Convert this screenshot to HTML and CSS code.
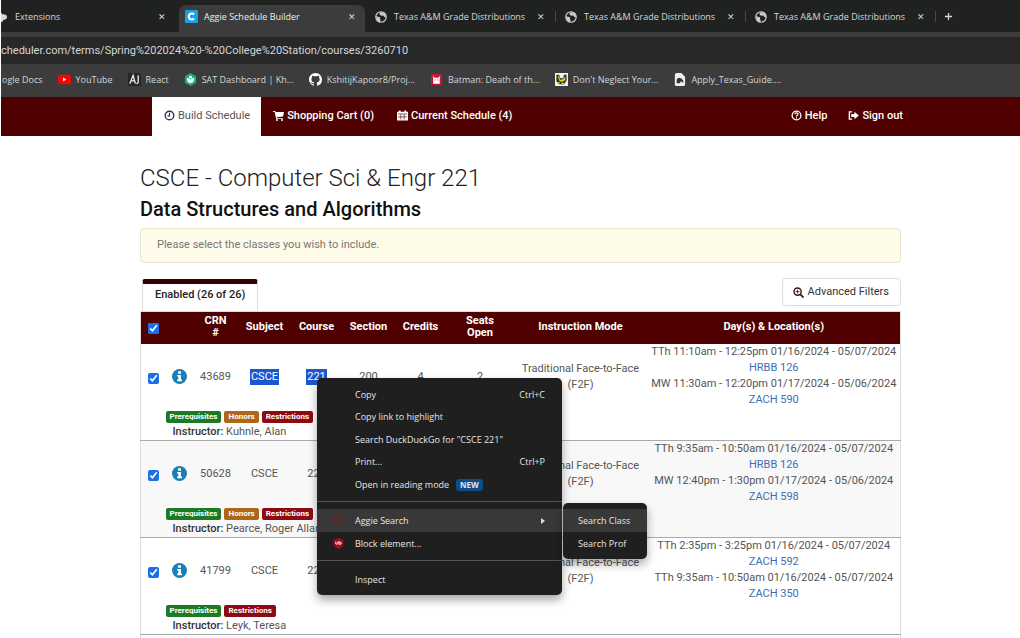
FILE: index.html
```html
<!DOCTYPE html>
<html lang="en">
<head>
  <meta charset="utf-8">
  <title>Aggie Schedule Builder</title>
  <link rel="stylesheet" href="styles.css">
</head>
<body>
  <svg class="sprite" aria-hidden="true">
    <symbol id="globe" viewBox="0 0 16 16">
      <circle cx="8" cy="8" r="7" fill="#202221" stroke="#c8cacc" stroke-width="1.6"/>
      <path d="M1.5 6.5 4 7.5l3 .8-.5 2.2 1 1.5-.5 3C3.5 14.5 1.2 11.500 1.5 6.500zM6 1.500l5 0 3 2.500 1 4.500-2.500-.5-1.500-2-3 .2-1.800-1.700z" fill="#c8cacc"/>
    </symbol>
    <symbol id="info" viewBox="0 0 16 16">
      <circle cx="8" cy="8" r="8" fill="#1a7fb5"/>
      <path d="M6.500 2.500h3v2.500h-3zM5.500 6.300h4v5h1.200V13H5.500v-1.700h1.200V8H5.500z" fill="#fff"/>
    </symbol>
  </svg>

  <div class="browser">
    <div class="tabs">
      <div class="tab tab-first">
        <svg class="puzzle" viewBox="0 0 6 12"><path d="M0 2h1v1.500c3-.5 5 .5 5 2.500s-2 3-3 2.500L1 11H0z" fill="#d5d7d8"/></svg>
        <span class="tab-title">Extensions</span>
        <button class="close" aria-label="Close tab">✕</button>
      </div>
      <div class="tab active">
        <svg class="fav" viewBox="0 0 14 14"><rect width="14" height="14" rx="1" fill="#1ba0e8"/><path d="M9.800 4.800A3.300 3.300 0 1 0 9.800 9.200" fill="none" stroke="#fff" stroke-width="2.200"/></svg>
        <span class="tab-title">Aggie Schedule Builder</span>
        <button class="close" aria-label="Close tab">✕</button>
      </div>
      <div class="tab">
        <svg class="fav globe"><use href="#globe"/></svg>
        <span class="tab-title">Texas A&amp;M Grade Distributions</span>
        <button class="close" aria-label="Close tab">✕</button>
      </div>
      <div class="tab divided">
        <svg class="fav globe"><use href="#globe"/></svg>
        <span class="tab-title">Texas A&amp;M Grade Distributions</span>
        <button class="close" aria-label="Close tab">✕</button>
      </div>
      <div class="tab divided">
        <svg class="fav globe"><use href="#globe"/></svg>
        <span class="tab-title">Texas A&amp;M Grade Distributions</span>
        <button class="close" aria-label="Close tab">✕</button>
      </div>
      <button class="new-tab divided" aria-label="New tab"><svg viewBox="0 0 10 10"><path d="M5 1v8M1 5h8" stroke="#d5d7d8" stroke-width="1.400"/></svg></button>
    </div>

    <div class="address">
      <input class="url" type="text" aria-label="Address" value="cheduler.com/terms/Spring%202024%20-%20College%20Station/courses/3260710">
    </div>

    <div class="bookmarks">
      <a class="bm" href="#">ogle Docs</a>
      <a class="bm" href="#"><svg viewBox="0 0 14 14"><rect x="0" y="2" width="14" height="10" rx="2" fill="#f00"/><path d="M5.500 4.800v4.400L9 7z" fill="#fff"/></svg>YouTube</a>
      <a class="bm" href="#"><svg viewBox="0 0 14 14"><rect width="14" height="14" rx="2" fill="#262626"/><path d="M2 11.500 5.500 2.500 8 11.500M3 8.500h4M11 2.500v7q0 2-2 2" fill="none" stroke="#eee" stroke-width="1.400"/></svg>React</a>
      <a class="bm" href="#"><svg viewBox="0 0 14 14"><path d="M7 0l6 3.500v7L7 14l-6-3.500v-7z" fill="#14b083"/><circle cx="7" cy="4.500" r="1.500" fill="#fff"/><path d="M3 5.500c3 0 4 1.500 4 2.500 0-1 1-2.500 4-2.500 0 4-2 5.500-4 5.500S3 9.500 3 5.500z" fill="#fff"/></svg>SAT Dashboard | Kh...</a>
      <a class="bm" href="#"><svg viewBox="0 0 16 16"><path fill="#fff" d="M8 0C3.580 0 0 3.580 0 8c0 3.540 2.290 6.530 5.470 7.590.4.070.55-.17.55-.38 0-.19-.01-.82-.01-1.490-2.010.37-2.530-.49-2.690-.94-.09-.23-.48-.94-.82-1.130-.28-.15-.68-.52-.01-.53.63-.01 1.080.58 1.230.82.72 1.210 1.870.87 2.330.66.07-.52.28-.87.51-1.070-1.780-.2-3.640-.89-3.640-3.950 0-.87.31-1.590.82-2.150-.08-.2-.36-1.020.08-2.120 0 0 .67-.21 2.200.82.640-.18 1.320-.27 2-.27s1.360.09 2 .27c1.530-1.040 2.200-.82 2.200-.82.440 1.100.160 1.920.080 2.120.510.560.820 1.270.820 2.150 0 3.070-1.870 3.750-3.650 3.950.290.250.540.730.540 1.480 0 1.070-.01 1.930-.01 2.200 0 .210.150.460.550.380A8.010 8.010 0 0 0 16 8c0-4.420-3.580-8-8-8z"/></svg>KshitijKapoor8/Proj...</a>
      <a class="bm" href="#"><svg viewBox="0 0 14 14"><rect x="1" y="1" width="12" height="12" fill="#c2183a"/><path d="M3.500 3 5 5h4l1.500-2v8.500h-7z" fill="#fff"/><path d="M5 7.500h1M8 7.500h1" stroke="#c2183a"/></svg>Batman: Death of th...</a>
      <a class="bm" href="#"><svg viewBox="0 0 14 14"><rect width="14" height="14" fill="#f4f4ee"/><path d="M1.500 2h3l1.500 4 3-.5L9.500 2h3v6l-3 4.500-5-.5-3-3z" fill="#333"/><path d="M3 3.500l1.500 0 1 4 3.500-1 2-3v4l-3 2-3-.5zM3 10a1.300 1.300 0 1 0 2.600 0zM7 10.500h2.500v1.500H7z" fill="#e8dc1c"/></svg>Don't Neglect Your...</a>
      <a class="bm" href="#"><svg viewBox="0 0 14 14"><path d="M2 2a2 2 0 0 1 2-2h5l4 4v8a2 2 0 0 1-2 2H4a2 2 0 0 1-2-2z" fill="#eee"/><path d="M4 11V7l2-2 3 1 2 2v3l-2-2-2 2z" fill="#333"/></svg>Apply_Texas_Guide....</a>
    </div>
  </div>

  <nav class="navbar">
    <a class="nav-link nav-current" href="#"><svg viewBox="0 0 12 12"><circle cx="6" cy="6" r="4.700" fill="none" stroke="#2c3350" stroke-width="1.500"/><path d="M6 3v3.400H3.800" fill="none" stroke="#2c3350" stroke-width="1.200"/></svg>Build Schedule</a>
    <a class="nav-link" href="#"><svg viewBox="0 0 12 12"><path d="M0 1h2.500l.4 1.200H12L11 7 4.200 7.800l.2.800h6.200v1H3.400L1.800 2.200H0z" fill="#fff"/><circle cx="4.300" cy="10.800" r="1.100" fill="#fff"/><circle cx="9.800" cy="10.800" r="1.100" fill="#fff"/></svg>Shopping Cart (0)</a>
    <a class="nav-link" href="#"><svg viewBox="0 0 12 12"><path d="M0 2h2V.5h2V2h4V.5h2V2h2v9.500H0z" fill="#fff"/><path d="M1 4.300h10M1 7.500h10M4.200 4.500v6M7.800 4.500v6" stroke="#500000" stroke-width=".7"/></svg>Current Schedule (4)</a>
    <a class="nav-link nav-help" href="#"><svg viewBox="0 0 12 12"><circle cx="6" cy="6" r="4.800" fill="none" stroke="#fff" stroke-width="1.400"/><path d="M4.200 4.600Q4.500 3.200 6 3.200t1.800 1.400Q7.800 5.500 6 6.200v.8M6 8v1.300" fill="none" stroke="#fff" stroke-width="1.300"/></svg>Help</a>
    <a class="nav-link nav-out" href="#"><svg viewBox="0 0 12 12"><path d="M4.500 2H1.500v8h3" fill="none" stroke="#fff" stroke-width="1.500"/><path d="M3.500 4.300H7V1.800L11.800 6 7 10.200V7.700H3.500z" fill="#fff"/></svg>Sign out</a>
  </nav>

  <main class="page">
    <h1>CSCE - Computer Sci &amp; Engr 221</h1>
    <h2>Data Structures and Algorithms</h2>
    <div class="notice">Please select the classes you wish to include.</div>

    <div class="toolbar">
      <button class="enabled-tab">Enabled (26 of 26)</button>
      <button class="filters"><svg viewBox="0 0 12 12"><circle cx="5" cy="5" r="3.900" fill="none" stroke="#3a1a1a" stroke-width="1.600"/><path d="M8 8l3.500 3.500" stroke="#3a1a1a" stroke-width="2"/><path d="M5 3v4M3 5h4" stroke="#3a1a1a"/></svg>Advanced Filters</button>
    </div>

    <table class="sections">
      <colgroup>
        <col class="c-check"><col class="c-info"><col class="c-crn"><col class="c-num"><col class="c-num"><col class="c-num"><col class="c-num"><col class="c-seats"><col class="c-mode"><col>
      </colgroup>
      <thead>
        <tr>
          <th><input type="checkbox" aria-label="Select all sections" checked></th>
          <th></th>
          <th>CRN<br>#</th>
          <th>Subject</th>
          <th>Course</th>
          <th>Section</th>
          <th>Credits</th>
          <th>Seats<br>Open</th>
          <th>Instruction Mode</th>
          <th>Day(s) &amp; Location(s)</th>
        </tr>
      </thead>
      <tbody>
        <tr class="main">
          <td><input type="checkbox" aria-label="Section 43689" checked></td>
          <td><svg class="info"><use href="#info"/></svg></td>
          <td>43689</td>
          <td><span class="selected">CSCE</span></td>
          <td><span class="selected">221</span></td>
          <td>200</td>
          <td>4</td>
          <td>2</td>
          <td>Traditional Face-to-Face (F2F)</td>
          <td class="days">TTh 11:10am - 12:25pm 01/16/2024 - 05/07/2024<br><a href="#">HRBB 126</a><br>MW 11:30am - 12:20pm 01/17/2024 - 05/06/2024<br><a href="#">ZACH 590</a></td>
        </tr>
        <tr class="extra">
          <td></td>
          <td colspan="9">
            <div class="badges"><span class="badge green">Prerequisites</span><span class="badge orange">Honors</span><span class="badge red">Restrictions</span></div>
            <div class="instructor"><b>Instructor:</b> Kuhnle, Alan</div>
          </td>
        </tr>
      </tbody>
      <tbody>
        <tr class="main">
          <td><input type="checkbox" aria-label="Section 50628" checked></td>
          <td><svg class="info"><use href="#info"/></svg></td>
          <td>50628</td>
          <td>CSCE</td>
          <td>221</td>
          <td></td>
          <td></td>
          <td></td>
          <td>Traditional Face-to-Face (F2F)</td>
          <td class="days">TTh 9:35am - 10:50am 01/16/2024 - 05/07/2024<br><a href="#">HRBB 126</a><br>MW 12:40pm - 1:30pm 01/17/2024 - 05/06/2024<br><a href="#">ZACH 598</a></td>
        </tr>
        <tr class="extra">
          <td></td>
          <td colspan="9">
            <div class="badges"><span class="badge green">Prerequisites</span><span class="badge orange">Honors</span><span class="badge red">Restrictions</span></div>
            <div class="instructor"><b>Instructor:</b> Pearce, Roger Allan</div>
          </td>
        </tr>
      </tbody>
      <tbody>
        <tr class="main">
          <td><input type="checkbox" aria-label="Section 41799" checked></td>
          <td><svg class="info"><use href="#info"/></svg></td>
          <td>41799</td>
          <td>CSCE</td>
          <td>221</td>
          <td></td>
          <td></td>
          <td></td>
          <td>Traditional Face-to-Face (F2F)</td>
          <td class="days">TTh 2:35pm - 3:25pm 01/16/2024 - 05/07/2024<br><a href="#">ZACH 592</a><br>TTh 9:35am - 10:50am 01/16/2024 - 05/07/2024<br><a href="#">ZACH 350</a></td>
        </tr>
        <tr class="extra">
          <td></td>
          <td colspan="9">
            <div class="badges"><span class="badge green">Prerequisites</span><span class="badge red">Restrictions</span></div>
            <div class="instructor"><b>Instructor:</b> Leyk, Teresa</div>
          </td>
        </tr>
      </tbody>
      <tbody>
        <tr class="main">
          <td colspan="9"></td>
          <td class="days">TTh 3:55pm - 4:45pm 01/16/2024 - 05/07/2024</td>
        </tr>
      </tbody>
    </table>
  </main>

  <div class="menu context-menu">
    <div class="menu-group">
      <button class="item">Copy<span class="key">Ctrl+C</span></button>
      <button class="item">Copy link to highlight</button>
      <button class="item">Search DuckDuckGo for "CSCE 221"</button>
      <button class="item">Print...<span class="key">Ctrl+P</span></button>
      <button class="item">Open in reading mode<span class="new">NEW</span></button>
    </div>
    <hr>
    <button class="item hovered"><svg class="item-icon" viewBox="0 0 12 12"><path d="M3 10.500A5 5 0 1 1 9 10.500M2 10.500h2.500M7.500 10.500H10" fill="none" stroke="#7a1c1c" stroke-width="1.300"/></svg>Aggie Search<span class="arrow"></span></button>
    <button class="item"><svg class="item-icon" viewBox="0 0 12 12"><path d="M6 0l5.500 1.500v5Q11 10 6 12 1 10 .5 6.500v-5z" fill="#a00d16"/><path d="M3 4v2.200q1.300 1.300 2.200 0V4M6.500 3.800v3.200M6.500 4.300q2.700 0 2.700 1.300T6.500 6.900" fill="none" stroke="#fff" stroke-width="1"/></svg>Block element...</button>
    <hr>
    <button class="item">Inspect</button>
  </div>

  <div class="menu submenu">
    <button class="item hovered">Search Class</button>
    <button class="item">Search Prof</button>
  </div>
</body>
</html>
```
FILE: styles.css
```css
* { box-sizing: border-box; }
body {
  margin: 0;
  height: 100vh;
  overflow: hidden;
  background: #fff;
  color: #555;
  font: 11px/16px Roboto, "Liberation Sans", sans-serif;
}
a { text-decoration: none; }
button { border: none; background: none; padding: 0; font: inherit; }
.sprite { position: absolute; width: 0; height: 0; }

/* browser chrome */
.browser {
  margin-left: 1px;
  background: #3c3c3c;
  color: #d5d7d8;
  font: 9px/16px "Open Sans", "Noto Sans", sans-serif;
}
.tabs {
  display: flex;
  height: 32px;
  padding-top: 5px;
  background: #202221;
}
.tab {
  display: flex;
  align-items: center;
  width: 190px;
  padding: 0 9px 4px 10px;
}
.tab-first { width: 178px; padding: 0 12px 4px 0; }
.tab-first .tab-title { margin-left: 8px; }
.active {
  width: 186px;
  padding: 0 8px 4px 6px;
  background: #3c3c3c;
  border-radius: 7px 7px 0 0;
  color: #eee;
}
.tab-title { flex: 1; white-space: nowrap; }
.fav { width: 13px; height: 13px; margin-right: 6px; }
.globe { width: 12px; height: 12px; margin-right: 7px; }
.puzzle { width: 6px; height: 12px; }
.close { width: 10px; color: #d5d7d8; font-size: 9px; line-height: 16px; }
.divided {
  background: linear-gradient(#484a49, #484a49) 0 6px / 1px 11px no-repeat;
}
.new-tab { width: 26px; height: 23px; }
.new-tab svg { display: block; width: 9px; height: 9px; margin: auto; }
.address { padding: 5px 0 0; }
.url {
  display: block;
  width: 100%;
  height: 27px;
  padding: 0;
  border: none;
  background: #282828;
  color: #d5d7d8;
  font: 11px/16px Roboto, "Liberation Sans", sans-serif;
}
.bookmarks {
  display: flex;
  align-items: center;
  height: 33px;
  padding: 0 0 2px 1px;
}
.bm {
  display: flex;
  align-items: center;
  gap: 5px;
  margin-right: 15px;
  color: #d5d7d8;
  white-space: nowrap;
}
.bm svg { width: 13px; height: 13px; }

/* site navigation */
.navbar {
  display: flex;
  height: 39px;
  margin-left: 1px;
  padding: 0 117px 0 151px;
  background: #500000;
}
.nav-link {
  display: flex;
  align-items: center;
  gap: 3px;
  padding: 0 11px 2px 12px;
  color: #fff;
  font-weight: 500;
}
.nav-link svg { width: 11px; height: 11px; }
.nav-current { background: #fff; color: #555; font-weight: 400; }
.nav-help { margin-left: auto; }
.nav-out { padding: 0 0 2px 10px; }

/* course page */
.page { padding: 28px 119px 0 140px; }
h1 { margin: 0; color: #222; font-size: 24px; font-weight: 300; line-height: 28px; }
h2 { margin: 4px 0 6px; color: #111; font-size: 20px; font-weight: 500; line-height: 26px; }
.notice {
  height: 35px;
  padding: 8px 16px;
  border: 1px solid #e9e5d0;
  border-radius: 4px;
  background: #fffbe9;
  color: #777;
}
.toolbar {
  display: flex;
  justify-content: space-between;
  align-items: flex-start;
  height: 48px;
  padding: 15px 0 0 2px;
}
.enabled-tab {
  height: 33px;
  margin-top: 1px;
  padding: 0 12px 6px;
  border: 1px solid #ddd;
  border-top: 5px solid #3a0003;
  border-bottom: none;
  border-radius: 3px 3px 0 0;
  color: #222;
  font-weight: 500;
}
.filters {
  display: flex;
  align-items: center;
  gap: 4px;
  height: 28px;
  padding: 0 11px 0 10px;
  border: 1px solid #ddd;
  border-radius: 4px;
  color: #333;
}
.filters svg { width: 11px; height: 11px; }

.sections {
  width: 100%;
  table-layout: fixed;
  border-collapse: collapse;
  border: 1px solid #ddd;
  text-align: center;
}
.c-check { width: 25px; }
.c-info { width: 27px; }
.c-crn { width: 46px; }
.c-num { width: 52px; }
.c-seats { width: 67px; }
.c-mode { width: 134px; }
th {
  height: 32px;
  padding: 0 0 2px;
  background: #500000;
  color: #fff;
  font-weight: 700;
  line-height: 12px;
}
td { padding: 0; }
.main { height: 66px; }
.main .days { vertical-align: top; }
.extra { height: 31px; text-align: left; vertical-align: top; }
tbody { border-bottom: 1px solid #aaa; }
tbody:nth-of-type(even) { background: #f8f8f8; }
input[type="checkbox"] {
  display: block;
  width: 11px;
  height: 11px;
  margin: 4px auto 0;
  accent-color: #1a6fe8;
}
.info { display: block; width: 15px; height: 15px; margin: auto; }
.days a { color: #3f6db5; }
.selected { display: inline-block; padding: 0 1px; background: #1c57cf; color: #fff; }
.badges { display: flex; gap: 3px; padding-top: 1px; }
.badge {
  height: 12px;
  padding: 0 4px;
  border-radius: 2px;
  color: #fff;
  font-size: 8px;
  font-weight: 700;
  line-height: 12px;
}
.green { background: #1d7a24; }
.orange { background: #b0661a; }
.red { background: #8d0a12; }
.instructor { padding: 1px 0 0 7px; }
.instructor b { color: #333; font-weight: 500; }

/* context menu */
.menu {
  position: absolute;
  padding: 6px 0 4px;
  border-radius: 5px;
  background: #1f1f1f;
  box-shadow: 0 5px 10px rgba(0, 0, 0, 0.35);
  font: 9px/22px "Open Sans", "Noto Sans", sans-serif;
}
.context-menu { left: 317px; top: 378px; width: 245px; }
.submenu { left: 563px; top: 503px; width: 84px; }
.menu-group { display: grid; grid-template-rows: repeat(5, 1fr); height: 112px; }
.item {
  display: flex;
  align-items: center;
  width: 100%;
  height: 23px;
  padding: 0 17px 0 38px;
  color: #e6e6e6;
}
.menu-group .item { height: 22px; }
.submenu .item { padding: 0 15px; }
.hovered { background: #383838; }
.item-icon { width: 11px; height: 11px; margin: 0 11px 0 -22px; }
.key { margin-left: auto; }
.new {
  margin-left: 7px;
  padding: 0 4px;
  border-radius: 3px;
  background: #0b4f86;
  font-size: 8px;
  font-weight: 700;
  line-height: 12px;
}
.arrow {
  margin-left: auto;
  border: 3px solid transparent;
  border-left: 4px solid #ddd;
  border-right: none;
}
hr { margin: 5px 0 7px; border: none; border-top: 1px solid #555; }
```
